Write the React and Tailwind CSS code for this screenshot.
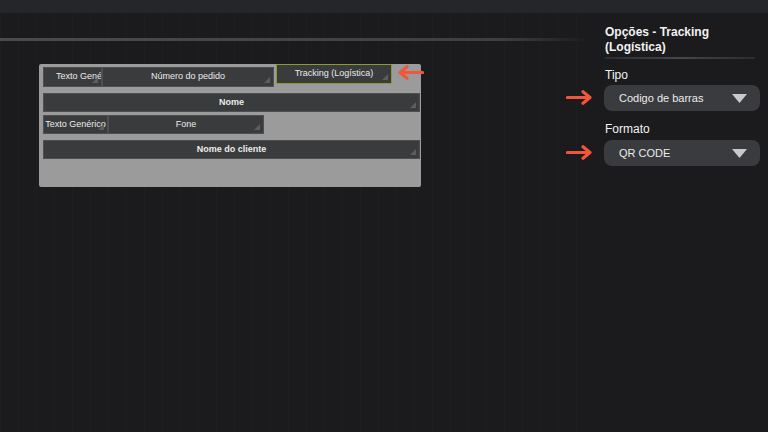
import React from 'react';

// Form layout editor: canvas on the left, properties panel on the right
const Handle = () => (
  <svg className="absolute right-[3px] bottom-[3px]" width="6" height="6" viewBox="0 0 6 6">
    <path d="M6 0 L6 6 L0 6 Z" fill="#5c5d60" />
  </svg>
);

const Field = ({ label, className = '', textClass = 'justify-center font-normal' }) => (
  <div
    className={`relative shrink-0 flex items-center ${textClass} overflow-hidden whitespace-nowrap bg-[#3a3b3d] border border-[#4e4f52] text-[9px] text-[#ececec] ${className}`}
  >
    {label}
    <Handle />
  </div>
);

const Arrow = ({ left }) => (
  <svg width="27" height="15" viewBox="0 0 27 15" className={left ? 'rotate-180' : ''}>
    <path d="M1.5 7.5 H23 M17 1.8 L24 7.5 L17 13.2" stroke="#f1553a" strokeWidth="3.2" fill="none" strokeLinecap="round" strokeLinejoin="round" />
  </svg>
);

const Select = ({ value }) => (
  <div className="flex items-center justify-between h-[26px] w-[156px] rounded-lg bg-[#3a3b3f] pl-[15px] pr-[13px] text-[11px] text-[#ececec]">
    <span>{value}</span>
    <svg width="15" height="9" viewBox="0 0 15 9">
      <path d="M0 0 H15 L7.5 9 Z" fill="#c9c9cc" />
    </svg>
  </div>
);

export default function App() {
  return (
    <div className="h-screen w-full bg-[#1b1b1d] font-['Liberation_Sans',Arial,sans-serif] flex flex-col overflow-hidden">
      <div className="h-[13px] bg-[#252629]" />
      <div className="flex flex-1">
        {/* canvas */}
        <div className="flex-1 flex flex-col bg-[linear-gradient(90deg,rgba(255,255,255,0.012)_1px,transparent_1px)] bg-[size:18px_18px]">
          <div className="mt-[25px] h-[3px] bg-[linear-gradient(90deg,#4a4b4e_0%,#3e3f42_85%,#1b1b1d_100%)]" />
          <div className="ml-[39px] mt-[23px] w-[382px] h-[123px] rounded-[2px] bg-[#9b9b9b] pl-[4px] flex flex-col">
            <div className="flex items-start">
              <Field label="Texto Genérico" className="mt-[3px] w-[59px] h-[20px] pl-[12px]" textClass="justify-start font-normal" />
              <Field label="Número do pedido" className="mt-[3px] w-[172px] h-[20px]" />
              <Field label="Tracking (Logística)" className="ml-[2px] w-[116px] h-[20px] border-[#8c9a34]" />
              <div className="shrink-0 ml-[5px] mt-[1px]">
                <Arrow left />
              </div>
            </div>
            <Field label="Nome" className="mt-[6px] w-[377px] h-[19px]" textClass="justify-center font-bold" />
            <div className="flex mt-[3px]">
              <Field label="Texto Genérico" className="w-[65px] h-[19px]" />
              <Field label="Fone" className="w-[156px] h-[19px]" />
            </div>
            <Field label="Nome do cliente" className="mt-[6px] w-[377px] h-[19px]" textClass="justify-center font-bold" />
          </div>
        </div>

        {/* properties panel */}
        <div className="w-[178px] pl-[15px] pt-[12px] flex flex-col text-[#f2f2f2]">
          <div className="text-[12px] font-bold leading-[15px]">Opções - Tracking (Logística)</div>
          <div className="mt-[2px] mr-[13px] h-[2px] bg-[linear-gradient(90deg,#2b2c2f,#46474a_50%,#2b2c2f)]" />
          <div className="mt-[9px] text-[12px] leading-[14px]">Tipo</div>
          <div className="relative mt-[3px] -ml-px">
            <div className="absolute -left-[38px] top-[5px]">
              <Arrow />
            </div>
            <Select value="Codigo de barras" />
          </div>
          <div className="mt-[11px] text-[12px] leading-[14px]">Formato</div>
          <div className="relative mt-[4px] -ml-px">
            <div className="absolute -left-[38px] top-[5px]">
              <Arrow />
            </div>
            <Select value="QR CODE" />
          </div>
        </div>
      </div>
    </div>
  );
}
